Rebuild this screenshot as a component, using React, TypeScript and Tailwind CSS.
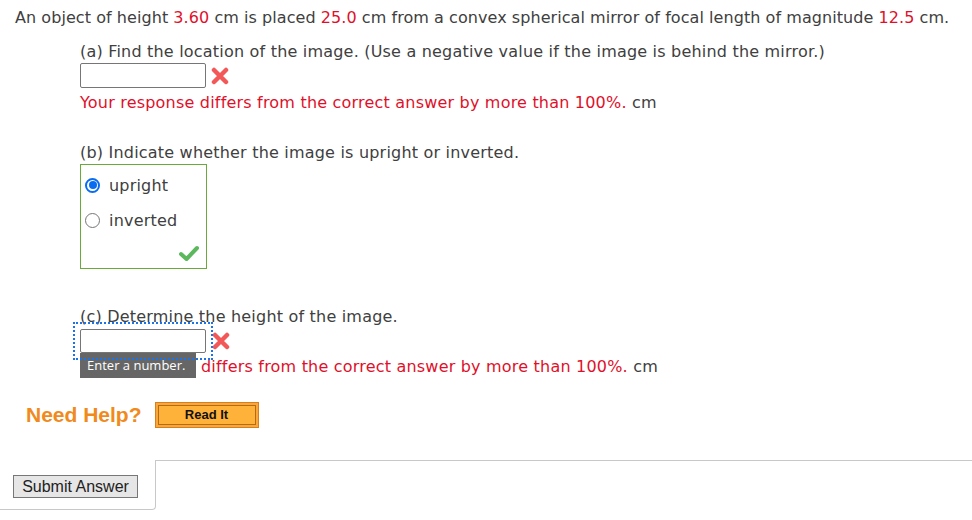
import React from "react";

const Red = ({ children }: { children: React.ReactNode }) => (
  <span className="text-[#e0102a]">{children}</span>
);

const XIcon = () => (
  <svg width="18" height="18" viewBox="0 0 18 18" className="block">
    <path d="M3 3 L15 15 M15 3 L3 15" stroke="#f25858" strokeWidth="4.5" strokeLinecap="round" />
  </svg>
);

const CheckIcon = () => (
  <svg width="20" height="17" viewBox="0 0 20 17" className="block">
    <path d="M2 9 L7.5 14 L18 3" stroke="#5cb85c" strokeWidth="4" fill="none" strokeLinecap="round" strokeLinejoin="round" />
  </svg>
);

export default function App() {
  return (
    <div className="w-[972px] h-[520px] bg-white text-[#404040] text-[16px] tracking-[0.2px] font-['DejaVu_Sans',sans-serif] overflow-hidden">
      <p className="pl-[15px] pt-[7px] leading-[20px] whitespace-nowrap tracking-[0.06px] relative top-[1px]">
        An object of height <Red>3.60</Red> cm is placed <Red>25.0</Red> cm from a convex spherical mirror of focal length of magnitude <Red>12.5</Red> cm.
      </p>
      <div className="pl-[80px]">
        <p className="mt-[14px] leading-[20px] relative top-[1px]">(a) Find the location of the image. (Use a negative value if the image is behind the mirror.)</p>
        <div className="flex items-center mt-[2px]">
          <div className="w-[126px] h-[25px] border border-[#767676] rounded-[2px] bg-white" />
          <div className="ml-[5px]"><XIcon /></div>
        </div>
        <p className="mt-[4px] leading-[20px] text-[#e0102a] relative top-[1px]">
          Your response differs from the correct answer by more than 100%. <span className="text-[#404040]">cm</span>
        </p>
        <p className="mt-[30px] leading-[20px] relative top-[1px]">(b) Indicate whether the image is upright or inverted.</p>
        <div className="mt-[2px] w-[127px] h-[105px] border border-[#6aaa3a] relative">
          <div className="flex items-center h-[20px] mt-[10px] pl-[4px]">
            <span className="w-[15px] h-[15px] rounded-full border-2 border-[#0a6cf0] flex items-center justify-center">
              <span className="w-[8px] h-[8px] rounded-full bg-[#0a6cf0]" />
            </span>
            <span className="ml-[9px] leading-[20px] relative top-[1px]">upright</span>
          </div>
          <div className="flex items-center h-[20px] mt-[15px] pl-[4px]">
            <span className="w-[15px] h-[15px] rounded-full border border-[#767676]" />
            <span className="ml-[9px] leading-[20px] relative top-[1px]">inverted</span>
          </div>
          <div className="absolute right-[7px] bottom-[6px]"><CheckIcon /></div>
        </div>
        <p className="mt-[37px] leading-[20px] relative top-[1px]">(c) Determine the height of the image.</p>
        <div className="relative">
          <div className="absolute left-[-7px] top-[-7px] w-[140px] h-[38px] border-2 border-dotted border-[#1a73e8]" />
          <div className="flex items-center mt-[3px]">
            <div className="w-[126px] h-[24px] border border-[#767676] rounded-[2px] bg-white" />
            <div className="ml-[6px]"><XIcon /></div>
          </div>
          <div className="flex items-center">
            <div className="w-[116px] h-[25px] bg-[#666666] text-white text-[13px] tracking-normal leading-[25px] pl-[7px] whitespace-nowrap font-['Open_Sans',sans-serif]">
              Enter a number.
            </div>
            <p className="ml-[5px] leading-[20px] text-[#e0102a] relative top-[1px]">
              differs from the correct answer by more than 100%. <span className="text-[#404040]">cm</span>
            </p>
          </div>
        </div>
      </div>
      <div className="flex items-center pl-[26px] mt-[24px] tracking-normal">
        <span className="font-['Liberation_Sans',sans-serif] font-bold text-[21px] leading-[24px] text-[#f08a1c]">Need Help?</span>
        <div className="ml-[13px] w-[104px] h-[26px] border border-[#d77f1c] bg-[#f9a63a] p-[2px]">
          <div className="w-full h-full border border-[#b56a14] bg-[#ffb23a] flex items-center justify-center font-['Liberation_Sans',sans-serif] font-bold text-[13px] text-[#111]">
            Read It
          </div>
        </div>
      </div>
      <div className="flex mt-[32px] tracking-normal">
        <div className="w-[156px] h-[50px] border-b border-r border-[#c8c8c8] rounded-br-[4px] pl-[13px] pt-[15px]">
          <button className="w-[125px] h-[23px] border border-[#777777] bg-[#e6e6e6] text-[16px] leading-[21px] font-['Liberation_Sans',sans-serif] text-[#222]">
            Submit Answer
          </button>
        </div>
        <div className="flex-1 border-t border-[#c8c8c8]" />
      </div>
    </div>
  );
}
